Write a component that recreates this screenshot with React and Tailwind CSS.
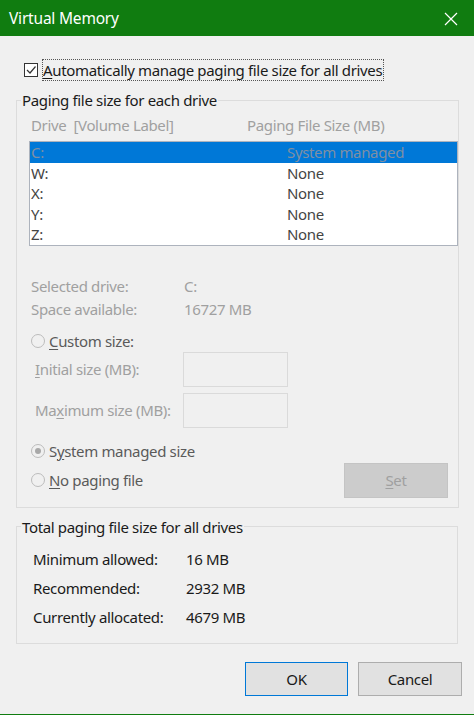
import React from 'react'

const dis = 'text-[#a0a0a0]'

const Radio = ({ checked }) => (
    <span className="relative inline-block w-[14px] h-[14px] rounded-full border border-[#bcbcbc] bg-[#f0f0f0] shrink-0">
        {checked && (
            <span className="absolute left-[3px] top-[3px] w-[6px] h-[6px] rounded-full bg-[#a8a8a8]" />
        )}
    </span>
)

const Row = ({ drive, size, selected }) => (
    <div
        className={
            'flex h-[20.6px] leading-[20.6px] pl-[1px] ' +
            (selected ? 'bg-[#0078d7] text-[#7f8fa3]' : 'text-[#444]')
        }
    >
        <span className="w-[256px]">{drive}</span>
        <span>{size}</span>
    </div>
)

const App = () => {
    const drives = [
        { drive: 'C:', size: 'System managed', selected: true },
        { drive: 'W:', size: 'None' },
        { drive: 'X:', size: 'None' },
        { drive: 'Y:', size: 'None' },
        { drive: 'Z:', size: 'None' },
    ]

    return (
        <div
            className="w-[474px] h-[715px] bg-[#f0f0f0] text-[15px] tracking-[-0.35px] text-[#1a1a1a] flex flex-col border-b border-[#107c10]"
            style={{ fontFamily: '"Noto Sans", sans-serif' }}
        >
            {/* title bar */}
            <div className="h-[36px] bg-[#107c10] flex items-center justify-between pl-[9px] pr-[16px] shrink-0">
                <span className="text-white text-[15.5px] tracking-[-0.2px] mt-[2px]">Virtual Memory</span>
                <svg width="14" height="14" viewBox="0 0 14 14" className="mt-[1px]">
                    <path d="M1 1 L13 13 M13 1 L1 13" stroke="#fff" strokeWidth="1.2" />
                </svg>
            </div>

            {/* auto manage */}
            <div className="flex items-center h-[22px] mt-[23px] pl-[24px]">
                <span className="relative w-[14px] h-[14px] border border-[#333] bg-white shrink-0">
                    <svg width="12" height="12" viewBox="0 0 12 12" className="absolute left-0 top-0">
                        <path d="M2 6 L5 9 L10.5 2.5" fill="none" stroke="#333" strokeWidth="1.2" />
                    </svg>
                </span>
                <span className="ml-[4px] h-[22px] leading-[20px] border border-dotted border-[#555] pr-[1px]">
                    <span className="underline underline-offset-2 decoration-1">A</span>utomatically manage paging file size for all drives
                </span>
            </div>

            {/* paging file size for each drive */}
            <fieldset className="mt-[9px] ml-[16px] w-[442px] border border-[#dcdcdc] pb-[9px]">
                <legend className="ml-[4px] px-[1px] h-[20px] leading-[20px]">Paging file size for each drive</legend>
                <div className={'flex mt-[5px] h-[20px] leading-[20px] pl-[14px] ' + dis}>
                    <span className="w-[216px]">Drive&nbsp;&nbsp;[Volume Label]</span>
                    <span>Paging File Size (MB)</span>
                </div>
                <div className="mt-[6px] ml-[12px] w-[429px] border border-[#adb3bd] bg-white">
                    {drives.map(d => (
                        <Row key={d.drive} {...d} />
                    ))}
                </div>

                <div className={'pl-[14px] mt-[29px] ' + dis}>
                    <div className="flex h-[23px] leading-[23px]">
                        <span className="w-[153px]">Selected drive:</span>
                        <span>C:</span>
                    </div>
                    <div className="flex h-[23px] leading-[23px]">
                        <span className="w-[153px]">Space available:</span>
                        <span>16727 MB</span>
                    </div>
                </div>

                <div className="flex items-center gap-[4px] pl-[14px] mt-[10px] h-[21px] text-[#5a5a5a]">
                    <Radio />
                    <span><span className="underline underline-offset-2 decoration-1">C</span>ustom size:</span>
                </div>

                <div className={'flex items-center pl-[18px] ' + dis}>
                    <span className="w-[148px]"><span className="underline underline-offset-2 decoration-1">I</span>nitial size (MB):</span>
                    <span className="w-[105px] h-[35px] border border-[#dadada] bg-[#f0f0f0]" />
                </div>
                <div className={'flex items-center pl-[18px] mt-[6px] ' + dis}>
                    <span className="w-[148px]">Ma<span className="underline underline-offset-2 decoration-1">x</span>imum size (MB):</span>
                    <span className="w-[105px] h-[35px] border border-[#dadada] bg-[#f0f0f0]" />
                </div>

                <div className="flex items-center gap-[4px] pl-[14px] mt-[12px] h-[22px] text-[#5a5a5a]">
                    <Radio checked />
                    <span>S<span className="underline underline-offset-2 decoration-1">y</span>stem managed size</span>
                </div>

                <div className="flex items-center justify-between pl-[14px] pr-[10px] mt-[1px] h-[35px]">
                    <div className="flex items-center gap-[4px] text-[#5a5a5a]">
                        <Radio />
                        <span><span className="underline underline-offset-2 decoration-1">N</span>o paging file</span>
                    </div>
                    <div className={'w-[104px] h-[35px] bg-[#cccccc] border border-[#c4c4c4] flex items-center justify-center ' + dis}>
                        <span><span className="underline underline-offset-2 decoration-1">S</span>et</span>
                    </div>
                </div>
            </fieldset>

            {/* totals */}
            <fieldset className="mt-[9px] ml-[16px] w-[442px] border border-[#dcdcdc] pb-[11px]">
                <legend className="ml-[4px] px-[1px] h-[20px] leading-[20px]">Total paging file size for all drives</legend>
                <div className="mt-[8px] pl-[16px]">
                    <div className="flex h-[29px] leading-[29px]">
                        <span className="w-[153px]">Minimum allowed:</span>
                        <span>16 MB</span>
                    </div>
                    <div className="flex h-[29px] leading-[29px]">
                        <span className="w-[153px]">Recommended:</span>
                        <span>2932 MB</span>
                    </div>
                    <div className="flex h-[29px] leading-[29px]">
                        <span className="w-[153px]">Currently allocated:</span>
                        <span>4679 MB</span>
                    </div>
                </div>
            </fieldset>

            {/* buttons */}
            <div className="flex justify-end gap-[10px] mt-[18px] pr-[12px]">
                <button className="w-[103px] h-[34px] bg-[#e1e1e1] border border-[#0078d7] text-[#1a1a1a]">OK</button>
                <button className="w-[104px] h-[34px] bg-[#e1e1e1] border border-[#adadad] text-[#1a1a1a]">Cancel</button>
            </div>
        </div>
    )
}

export default App
